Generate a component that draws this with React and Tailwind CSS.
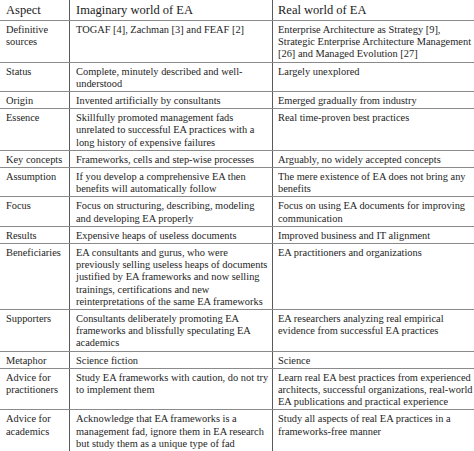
import React from "react";

const rows = [
  {
    aspect: ["Definitive", "sources"],
    imaginary: ["TOGAF [4], Zachman [3] and FEAF [2]"],
    real: [
      "Enterprise Architecture as Strategy [9],",
      "Strategic Enterprise Architecture Management",
      "[26] and Managed Evolution [27]",
    ],
  },
  {
    aspect: ["Status"],
    imaginary: ["Complete, minutely described and well-", "understood"],
    real: ["Largely unexplored"],
  },
  {
    aspect: ["Origin"],
    imaginary: ["Invented artificially by consultants"],
    real: ["Emerged gradually from industry"],
  },
  {
    aspect: ["Essence"],
    imaginary: [
      "Skillfully promoted management fads",
      "unrelated to successful EA practices with a",
      "long history of expensive failures",
    ],
    real: ["Real time-proven best practices"],
  },
  {
    aspect: ["Key concepts"],
    imaginary: ["Frameworks, cells and step-wise processes"],
    real: ["Arguably, no widely accepted concepts"],
  },
  {
    aspect: ["Assumption"],
    imaginary: ["If you develop a comprehensive EA then", "benefits will automatically follow"],
    real: ["The mere existence of EA does not bring any", "benefits"],
  },
  {
    aspect: ["Focus"],
    imaginary: ["Focus on structuring, describing, modeling", "and developing EA properly"],
    real: ["Focus on using EA documents for improving", "communication"],
  },
  {
    aspect: ["Results"],
    imaginary: ["Expensive heaps of useless documents"],
    real: ["Improved business and IT alignment"],
  },
  {
    aspect: ["Beneficiaries"],
    imaginary: [
      "EA consultants and gurus, who were",
      "previously selling useless heaps of documents",
      "justified by EA frameworks and now selling",
      "trainings, certifications and new",
      "reinterpretations of the same EA frameworks",
    ],
    real: ["EA practitioners and organizations"],
  },
  {
    aspect: ["Supporters"],
    imaginary: [
      "Consultants deliberately promoting EA",
      "frameworks and blissfully speculating EA",
      "academics",
    ],
    real: ["EA researchers analyzing real empirical", "evidence from successful EA practices"],
  },
  {
    aspect: ["Metaphor"],
    imaginary: ["Science fiction"],
    real: ["Science"],
  },
  {
    aspect: ["Advice for", "practitioners"],
    imaginary: ["Study EA frameworks with caution, do not try", "to implement them"],
    real: [
      "Learn real EA best practices from experienced",
      "architects, successful organizations, real-world",
      "EA publications and practical experience",
    ],
  },
  {
    aspect: ["Advice for", "academics"],
    imaginary: [
      "Acknowledge that EA frameworks is a",
      "management fad, ignore them in EA research",
      "but study them as a unique type of fad",
    ],
    real: ["Study all aspects of real EA practices in a", "frameworks-free manner"],
  },
];

const Lines = ({ lines }) => (
  <>
    {lines.map((l, i) => (
      <div key={i} className="whitespace-nowrap">
        {l}
      </div>
    ))}
  </>
);

export default function App() {
  return (
    <div
      className="w-[474px] h-[451px] overflow-hidden bg-white text-[#1e1e1e]"
      style={{ fontFamily: '"Liberation Serif", "Times New Roman", serif' }}
    >
      {/* header */}
      <div className="grid grid-cols-[70px_203px_201px] h-[21px] border-b border-[#8a8a8a] text-[12.5px] leading-[20px] text-[#1a1a1a]">
        <div className="pl-[6px] border-r border-[#5a5a5a]">Aspect</div>
        <div className="pl-[6px] border-r border-[#5a5a5a]">Imaginary world of EA</div>
        <div className="pl-[5px]">Real world of EA</div>
      </div>

      {rows.map((r, i) => (
        <div
          key={i}
          className="grid grid-cols-[70px_203px_201px] border-b border-[#8a8a8a] text-[10.4px] leading-[12.2px]"
        >
          <div className="pl-[6px] pt-[3px] pb-[1px] border-r border-[#5a5a5a]">
            <Lines lines={r.aspect} />
          </div>
          <div className="pl-[6px] pt-[3px] pb-[1px] border-r border-[#5a5a5a]">
            <Lines lines={r.imaginary} />
          </div>
          <div className="pl-[5px] pt-[3px] pb-[1px]">
            <Lines lines={r.real} />
          </div>
        </div>
      ))}
    </div>
  );
}
